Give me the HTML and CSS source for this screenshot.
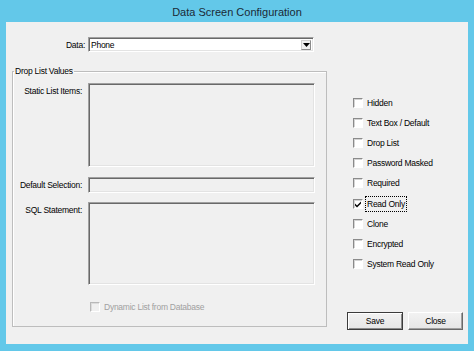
FILE: index.html
```html
<!DOCTYPE html>
<html>
<head>
<meta charset="utf-8">
<title>Data Screen Configuration</title>
<link rel="stylesheet" href="styles.css">
</head>
<body>
<div class="window">
  <div class="titlebar">Data Screen Configuration</div>
  <div class="client">
    <div class="data-row">
      <span class="data-label">Data:</span>
      <div class="combo">
        <span class="combo-value">Phone</span>
        <span class="combo-btn"><svg width="7" height="4" viewBox="0 0 7 4"><path d="M0 0h7L3.5 4z" fill="#000"/></svg></span>
      </div>
    </div>
    <div class="main">
      <fieldset class="group">
        <legend>Drop List Values</legend>
        <div class="row row-static">
          <span class="lbl lbl-top">Static List Items:</span>
          <div class="box box-static"></div>
        </div>
        <div class="row row-default">
          <span class="lbl">Default Selection:</span>
          <div class="box box-default"></div>
        </div>
        <div class="row row-sql">
          <span class="lbl lbl-top">SQL Statement:</span>
          <div class="box box-sql"></div>
        </div>
        <div class="dyn">
          <span class="cb cb-disabled"></span>
          <span class="dyn-text">Dynamic List from Database</span>
        </div>
      </fieldset>
      <div class="side">
        <div class="checks">
          <div class="check"><span class="cb"></span><span class="ctext">Hidden</span></div>
          <div class="check"><span class="cb"></span><span class="ctext">Text Box / Default</span></div>
          <div class="check"><span class="cb"></span><span class="ctext">Drop List</span></div>
          <div class="check"><span class="cb"></span><span class="ctext">Password Masked</span></div>
          <div class="check"><span class="cb"></span><span class="ctext">Required</span></div>
          <div class="check"><span class="cb"><svg width="8" height="8" viewBox="0 0 8 8"><path d="M1 3.5l2 2 4-4v2l-4 4-2-2z" fill="#000"/></svg></span><span class="ctext focus">Read Only</span></div>
          <div class="check"><span class="cb"></span><span class="ctext">Clone</span></div>
          <div class="check"><span class="cb"></span><span class="ctext">Encrypted</span></div>
          <div class="check"><span class="cb"></span><span class="ctext">System Read Only</span></div>
        </div>
        <div class="buttons">
          <button class="btn btn-default">Save</button>
          <button class="btn">Close</button>
        </div>
      </div>
    </div>
  </div>
</div>
</body>
</html>
```

FILE: styles.css
```css
html, body {
  margin: 0;
  padding: 0;
  background: #63c8e9;
}

.window {
  width: 474px;
  height: 351px;
  box-sizing: border-box;
  padding: 0 6px 7px 6px;
  background: #63c8e9;
  display: flex;
  flex-direction: column;
  font-family: "Liberation Sans", Arial, sans-serif;
  font-size: 8.5px;
  letter-spacing: -0.25px;
  color: #000;
}

.titlebar {
  height: 22px;
  line-height: 22px;
  padding-top: 1px;
  box-sizing: border-box;
  text-align: center;
  font-family: "Liberation Sans", Arial, sans-serif;
  font-size: 11px;
  letter-spacing: 0;
  color: #1b2a37;
}

.client {
  flex: 1;
  background: #f0f0f0;
  padding: 15px 0 0 6px;
  display: flex;
  flex-direction: column;
}

.data-row {
  display: flex;
  align-items: center;
  height: 15px;
}

.data-label {
  width: 73px;
  text-align: right;
  margin-right: 3px;
}

.combo {
  width: 226px;
  height: 15px;
  box-sizing: border-box;
  background: #fff;
  border-top: 1px solid #a0a0a0;
  border-left: 1px solid #a0a0a0;
  border-right: 1px solid #fff;
  border-bottom: 1px solid #fff;
  box-shadow: inset 1px 1px 0 #696969, inset -1px -1px 0 #e3e3e3;
  display: flex;
  align-items: center;
  padding: 0 2px 0 2px;
}

.combo-value {
  flex: 1;
  line-height: 12px;
}

.combo-btn {
  width: 10px;
  height: 10px;
  box-sizing: border-box;
  border: 1px solid #d0d0d0;
  border-right-color: #8a8a8a;
  border-bottom-color: #8a8a8a;
  background: #f0f0f0;
  display: flex;
  align-items: center;
  justify-content: center;
}

.main {
  display: flex;
  margin-top: 13px;
  flex: 1;
  padding-bottom: 17px;
}

.group {
  margin: 0;
  width: 315px;
  min-inline-size: 0;
  box-sizing: border-box;
  padding: 0 11px 13px 0;
  border: 1px solid #bdbdbd;
  box-shadow: inset 1px 1px 0 #fff;
}

.group legend {
  padding: 0 1px;
  margin-left: 1px;
  line-height: 12px;
}

.row {
  display: flex;
}

.row-static {
  margin-top: 6px;
}

.row-default {
  margin-top: 10px;
  align-items: center;
}

.row-sql {
  margin-top: 9px;
}

.lbl {
  width: 69px;
  margin-right: 6px;
  text-align: right;
  line-height: 12px;
  white-space: nowrap;
}

.lbl-top {
  padding-top: 2px;
}

.box {
  width: 227px;
  box-sizing: border-box;
  background: #f0f0f0;
  border-top: 1px solid #a0a0a0;
  border-left: 1px solid #a0a0a0;
  border-right: 1px solid #fff;
  border-bottom: 1px solid #fff;
  box-shadow: inset 1px 1px 0 #696969, inset -1px -1px 0 #e3e3e3;
}

.box-static {
  height: 84px;
}

.box-default {
  height: 16px;
}

.box-sql {
  height: 83px;
}

.dyn {
  display: flex;
  align-items: center;
  margin-top: 17px;
  margin-left: 77px;
  height: 10px;
}

.dyn-text {
  margin-left: 4px;
  color: #a0a0a0;
  line-height: 12px;
}

.cb {
  width: 10px;
  height: 10px;
  box-sizing: border-box;
  background: #fff;
  border-top: 1px solid #8a8a8a;
  border-left: 1px solid #8a8a8a;
  border-right: 1px solid #fff;
  border-bottom: 1px solid #fff;
  box-shadow: inset 1px 1px 0 #d4d4d4;
  display: flex;
  align-items: center;
  justify-content: center;
  flex: none;
}

.cb-disabled {
  background: #f0f0f0;
  border-top-color: #b8b8b8;
  border-left-color: #b8b8b8;
  box-shadow: inset 1px 1px 0 #dcdcdc;
}

.side {
  flex: 1;
  display: flex;
  flex-direction: column;
  padding-left: 20px;
}

.checks {
  padding-top: 28px;
  padding-left: 6px;
}

.check {
  height: 20.1px;
  display: flex;
  align-items: center;
}

.ctext {
  margin-left: 4px;
  line-height: 12px;
}

.focus {
  outline: 1px dotted #000;
  outline-offset: 0;
  padding: 1px 1px 1px 1px;
  margin-left: 3px;
}

.buttons {
  margin-top: auto;
  margin-bottom: -3px;
  display: flex;
  gap: 5px;
}

.btn {
  height: 18px;
  width: 55px;
  padding: 0;
  font-family: "Liberation Sans", Arial, sans-serif;
  font-size: 8.5px;
  letter-spacing: -0.25px;
  color: #000;
  background: linear-gradient(#f2f2f2, #e6e6e6);
  border: 1px solid #fff;
  border-right-color: #696969;
  border-bottom-color: #696969;
  box-shadow: inset -1px -1px 0 #a0a0a0;
}

.btn-default {
  width: 56px;
  border: 1px solid #3c3c3c;
  box-shadow: inset 1px 1px 0 #fff, inset -1px -1px 0 #8a8a8a;
}
```
